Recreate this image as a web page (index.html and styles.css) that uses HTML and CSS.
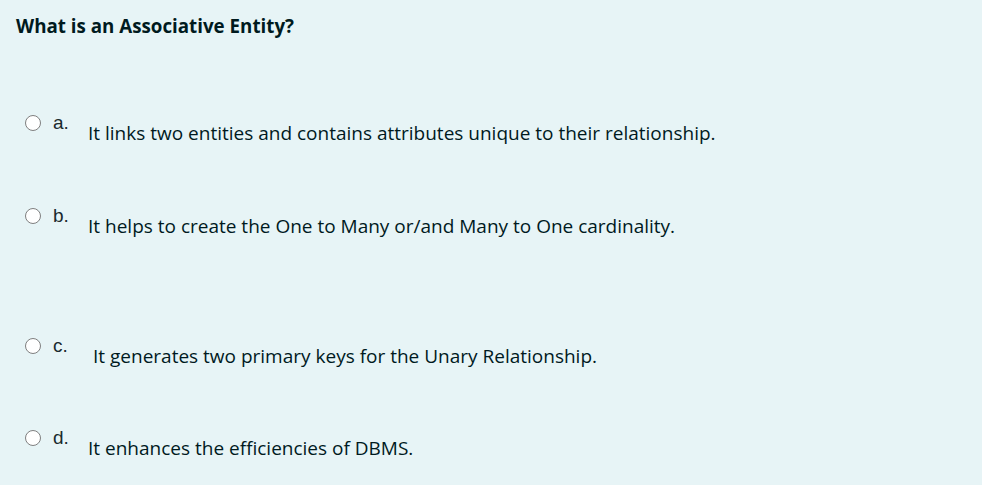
FILE: index.html
```html
<!DOCTYPE html>
<html lang="en">
<head>
    <meta charset="UTF-8">
    <meta name="viewport" content="width=device-width, initial-scale=1.0">
    <title>Question</title>
    <link rel="stylesheet" href="styles.css">
</head>
<body>
    <div class="formulation">
        <h2 class="qtext">What is an Associative Entity?</h2>

        <div class="answers">
            <div class="answer gap-a">
                <input type="radio" name="q1" class="radio" id="q1a">
                <label for="q1a" class="answernumber">a.</label>
                <p class="answertext">It links two entities and contains attributes unique to their relationship.</p>
            </div>
            <div class="answer gap-b">
                <input type="radio" name="q1" class="radio" id="q1b">
                <label for="q1b" class="answernumber">b.</label>
                <p class="answertext">It helps to create the One to Many or/and Many to One cardinality.</p>
            </div>
            <div class="answer gap-c">
                <input type="radio" name="q1" class="radio" id="q1c">
                <label for="q1c" class="answernumber">c.</label>
                <p class="answertext indent">It generates two primary keys for the Unary Relationship.</p>
            </div>
            <div class="answer">
                <input type="radio" name="q1" class="radio" id="q1d">
                <label for="q1d" class="answernumber">d.</label>
                <p class="answertext">It enhances the efficiencies of DBMS.</p>
            </div>
        </div>
    </div>
</body>
</html>
```

FILE: styles.css
```css
* {
    margin: 0;
    padding: 0;
    box-sizing: border-box;
}

html, body {
    height: 100%;
}

body {
    background: #e7f4f6;
    color: #001a1e;
    font-family: "Open Sans", "Noto Sans", sans-serif;
}

.formulation {
    padding: 13px 16px 0 16px;
}

.qtext {
    font-size: 18.75px;
    font-weight: 700;
    line-height: 26px;
}

.answers {
    margin-top: 76px;
    padding-left: 9px;
}

.answer {
    display: flex;
    align-items: flex-start;
}

/* uneven spacing between the options */
.gap-a { margin-bottom: 62px; }
.gap-b { margin-bottom: 99px; }
.gap-c { margin-bottom: 61px; }

.radio {
    appearance: none;
    -webkit-appearance: none;
    width: 16px;
    height: 16px;
    border: 1px solid #7f7f7f;
    border-radius: 50%;
    background: #fff;
    flex-shrink: 0;
}

.answernumber {
    font-family: "Liberation Sans", Arial, sans-serif;
    font-size: 19px;
    line-height: 15px;
    width: 35px;
    margin-left: 12px;
    color: #1a2a2e;
}

.answertext {
    font-size: 19px;
    line-height: 26px;
    padding-top: 5px;
}

.answertext.indent {
    padding-left: 5px;
}
```
